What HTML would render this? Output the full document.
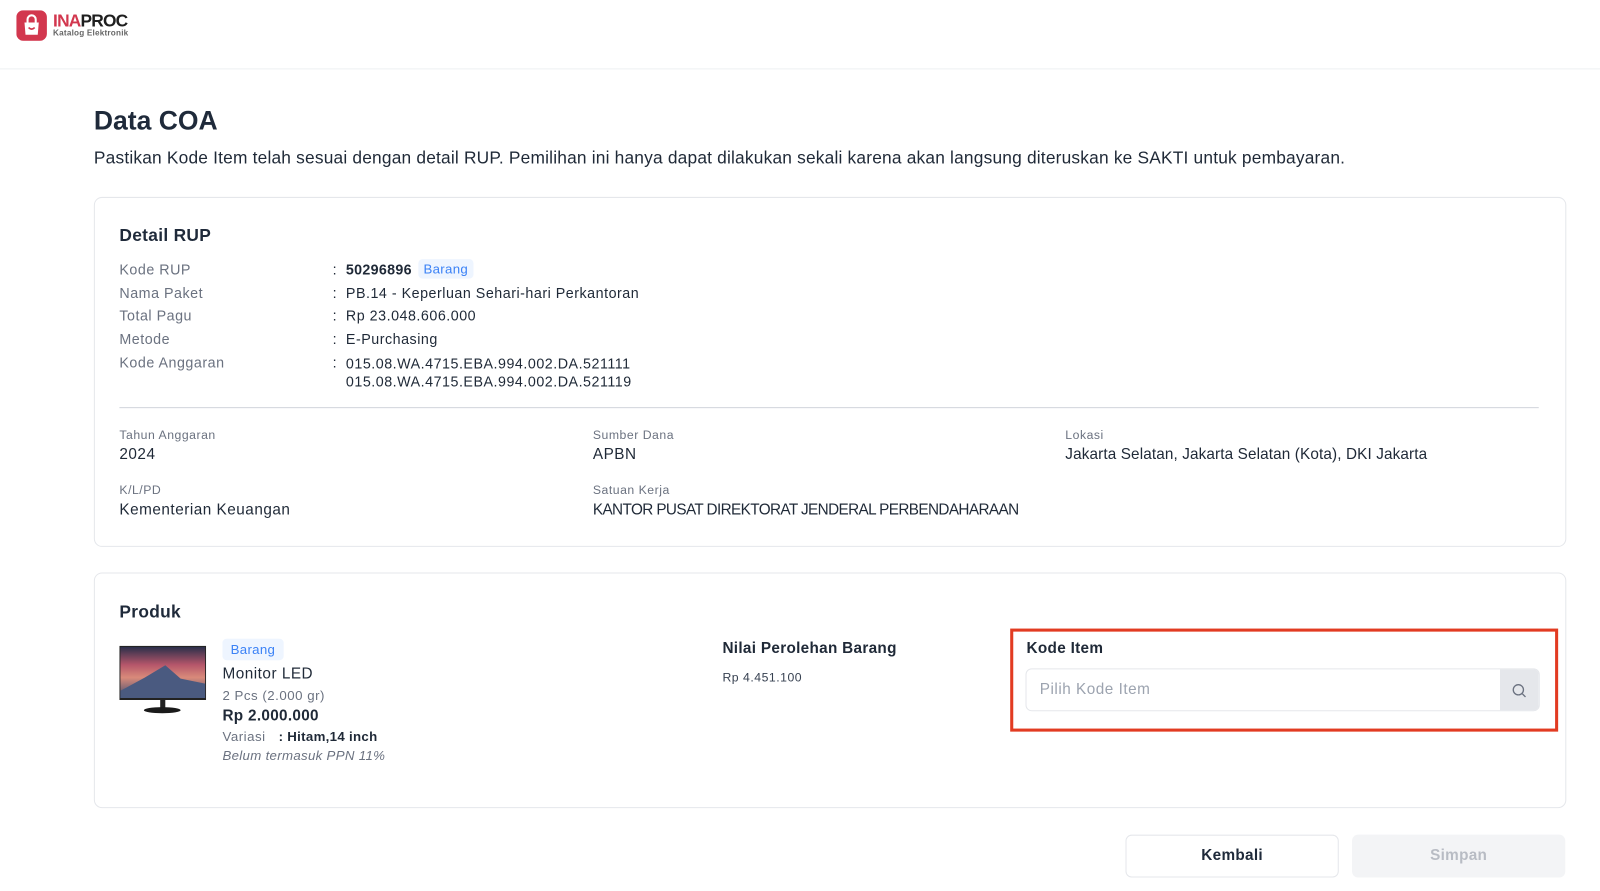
<!DOCTYPE html>
<html><head><meta charset="utf-8"><style>
*{margin:0;padding:0;box-sizing:border-box}
body{width:1600px;height:891px;background:#fff;font-family:"Liberation Sans",sans-serif;color:#1f2937;position:relative;overflow:hidden}
#w{position:absolute;left:0;top:0;width:1568px;height:873px;transform:scale(1.0204);transform-origin:0 0;letter-spacing:0.5px}
.a{position:absolute;white-space:nowrap}
.lbl{color:#6b7280;font-size:14px}
.val{color:#1f2937;font-size:14px}
.card{position:absolute;border:1px solid #e5e7eb;border-radius:8px;background:#fff}
.h{font-weight:bold;font-size:17px;color:#1f2a3a;letter-spacing:0.3px}
.badge{background:#eef5ff;color:#3b82f6;border-radius:4px;font-size:13px}
</style></head><body><div id="w">
<div class="a" style="left:0;top:0;width:1568px;height:68px;border-bottom:1px solid #eef0f2"></div>
<svg class="a" style="left:16px;top:10px" width="30" height="30" viewBox="0 0 30 30"><rect width="30" height="30" rx="7" fill="#d2374e"/><path d="M8 12h14l-1 12H9z" fill="#fff"/><path d="M11 12V9a4 4 0 0 1 8 0v3" stroke="#fff" stroke-width="2" fill="none"/><path d="M12 17q3 3 6 0" stroke="#d2374e" stroke-width="1.6" fill="none"/></svg>
<div class="a" style="left:52px;top:11px;font-size:17px;font-weight:bold;letter-spacing:-0.8px"><span style="color:#d2374e">INA</span><span style="color:#1f1f1f">PROC</span></div>
<div class="a" style="left:52px;top:28px;font-size:8px;color:#666;font-weight:bold;letter-spacing:0.2px">Katalog Elektronik</div>

<div class="a" style="left:92px;top:103px;font-size:26px;font-weight:bold;color:#1f2a3a;letter-spacing:0">Data COA</div>
<div class="a" style="left:92px;top:145px;font-size:17px;color:#1f2937;letter-spacing:0.18px">Pastikan Kode Item telah sesuai dengan detail RUP. Pemilihan ini hanya dapat dilakukan sekali karena akan langsung diteruskan ke SAKTI untuk pembayaran.</div>

<div class="card" style="left:92px;top:193px;width:1443px;height:343px"></div>
<div class="a h" style="left:117px;top:221px">Detail RUP</div>
<div class="a lbl" style="left:117px;top:256px">Kode RUP</div>
<div class="a lbl" style="left:117px;top:279px">Nama Paket</div>
<div class="a lbl" style="left:117px;top:301px">Total Pagu</div>
<div class="a lbl" style="left:117px;top:324px">Metode</div>
<div class="a lbl" style="left:117px;top:347px">Kode Anggaran</div>
<div class="a val" style="left:326px;top:256px">:</div>
<div class="a val" style="left:326px;top:279px">:</div>
<div class="a val" style="left:326px;top:301px">:</div>
<div class="a val" style="left:326px;top:324px">:</div>
<div class="a val" style="left:326px;top:347px">:</div>
<div class="a val" style="left:339px;top:256px;font-weight:bold;letter-spacing:0.3px">50296896</div>
<div class="a badge" style="left:410px;top:254px;padding:2px 5px;letter-spacing:0.3px">Barang</div>
<div class="a val" style="left:339px;top:279px">PB.14 - Keperluan Sehari-hari Perkantoran</div>
<div class="a val" style="left:339px;top:301px">Rp 23.048.606.000</div>
<div class="a val" style="left:339px;top:324px">E-Purchasing</div>
<div class="a val" style="left:339px;top:347px;line-height:18px">015.08.WA.4715.EBA.994.002.DA.521111<br>015.08.WA.4715.EBA.994.002.DA.521119</div>
<div class="a" style="left:117px;top:399px;width:1391px;height:1px;background:#d1d5db"></div>
<div class="a lbl" style="left:117px;top:419px;font-size:12px">Tahun Anggaran</div>
<div class="a val" style="left:117px;top:437px;font-size:15px">2024</div>
<div class="a lbl" style="left:581px;top:419px;font-size:12px">Sumber Dana</div>
<div class="a val" style="left:581px;top:437px;font-size:15px">APBN</div>
<div class="a lbl" style="left:1044px;top:419px;font-size:12px">Lokasi</div>
<div class="a val" style="left:1044px;top:437px;font-size:15px;letter-spacing:0.12px">Jakarta Selatan, Jakarta Selatan (Kota), DKI Jakarta</div>
<div class="a lbl" style="left:117px;top:473px;font-size:12px">K/L/PD</div>
<div class="a val" style="left:117px;top:491px;font-size:15px">Kementerian Keuangan</div>
<div class="a lbl" style="left:581px;top:473px;font-size:12px">Satuan Kerja</div>
<div class="a val" style="left:581px;top:491px;font-size:15px;letter-spacing:-0.6px">KANTOR PUSAT DIREKTORAT JENDERAL PERBENDAHARAAN</div>

<div class="card" style="left:92px;top:561px;width:1443px;height:231px"></div>
<div class="a h" style="left:117px;top:590px">Produk</div>
<svg class="a" style="left:117px;top:632px" width="85" height="68" viewBox="0 0 85 68"><defs><linearGradient id="g" x1="0" y1="0" x2="0" y2="1"><stop offset="0" stop-color="#2b2f4a"/><stop offset=".35" stop-color="#b5566a"/><stop offset=".6" stop-color="#d98a7a"/><stop offset="1" stop-color="#3e4c70"/></linearGradient></defs><rect x="0" y="1" width="85" height="53" fill="#222"/><rect x="1" y="2" width="83" height="50" fill="url(#g)"/><path d="M1 45 L25 32 L45 20 L60 33 L84 38 V52 H1z" fill="#4a5a80"/><rect x="40" y="54" width="5" height="8" fill="#222"/><ellipse cx="42" cy="64" rx="18" ry="3" fill="#1a1a1a"/></svg>
<div class="a badge" style="left:218px;top:626px;padding:3px 8px;letter-spacing:0.3px">Barang</div>
<div class="a val" style="left:218px;top:652px;font-size:15px">Monitor LED</div>
<div class="a lbl" style="left:218px;top:674px;font-size:13px">2 Pcs (2.000 gr)</div>
<div class="a val" style="left:218px;top:693px;font-size:15px;font-weight:bold;letter-spacing:0.3px">Rp 2.000.000</div>
<div class="a lbl" style="left:218px;top:714px;font-size:13px">Variasi</div>
<div class="a val" style="left:273px;top:714px;font-size:13px;font-weight:bold;letter-spacing:0.3px">: Hitam,14 inch</div>
<div class="a lbl" style="left:218px;top:733px;font-size:13px;font-style:italic;letter-spacing:0.3px">Belum termasuk PPN 11%</div>
<div class="a val" style="left:708px;top:627px;font-size:15px;font-weight:bold;letter-spacing:0.3px">Nilai Perolehan Barang</div>
<div class="a val" style="left:708px;top:657px;font-size:12px;color:#374151">Rp 4.451.100</div>

<div class="a" style="left:990px;top:616px;width:537px;height:101px;border:3px solid #e23b22"></div>
<div class="a val" style="left:1006px;top:627px;font-size:15px;font-weight:bold;letter-spacing:0.3px">Kode Item</div>
<div class="a" style="left:1005px;top:655px;width:504px;height:42px;border:1px solid #e5e7eb;border-radius:6px;overflow:hidden">
<div class="a" style="left:13px;top:11px;font-size:15px;color:#9ca3af">Pilih Kode Item</div>
<div class="a" style="right:0;top:0;width:38px;height:42px;background:#e5e7eb"></div>
<svg class="a" style="right:11px;top:13px" width="16" height="16" viewBox="0 0 16 16"><circle cx="7" cy="7" r="5" stroke="#6b7280" stroke-width="1.3" fill="none"/><path d="M11 11l3 3" stroke="#6b7280" stroke-width="1.3"/></svg>
</div>

<div class="a" style="left:1103px;top:818px;width:209px;height:42px;border:1px solid #e5e7eb;border-radius:6px;text-align:center;line-height:40px;font-size:15px;font-weight:bold;color:#1f2a3a;letter-spacing:0.3px">Kembali</div>
<div class="a" style="left:1325px;top:818px;width:209px;height:42px;background:#f3f4f6;border-radius:6px;text-align:center;line-height:42px;font-size:15px;font-weight:bold;color:#b8bcc4;letter-spacing:0.3px">Simpan</div>
</div></body></html>
